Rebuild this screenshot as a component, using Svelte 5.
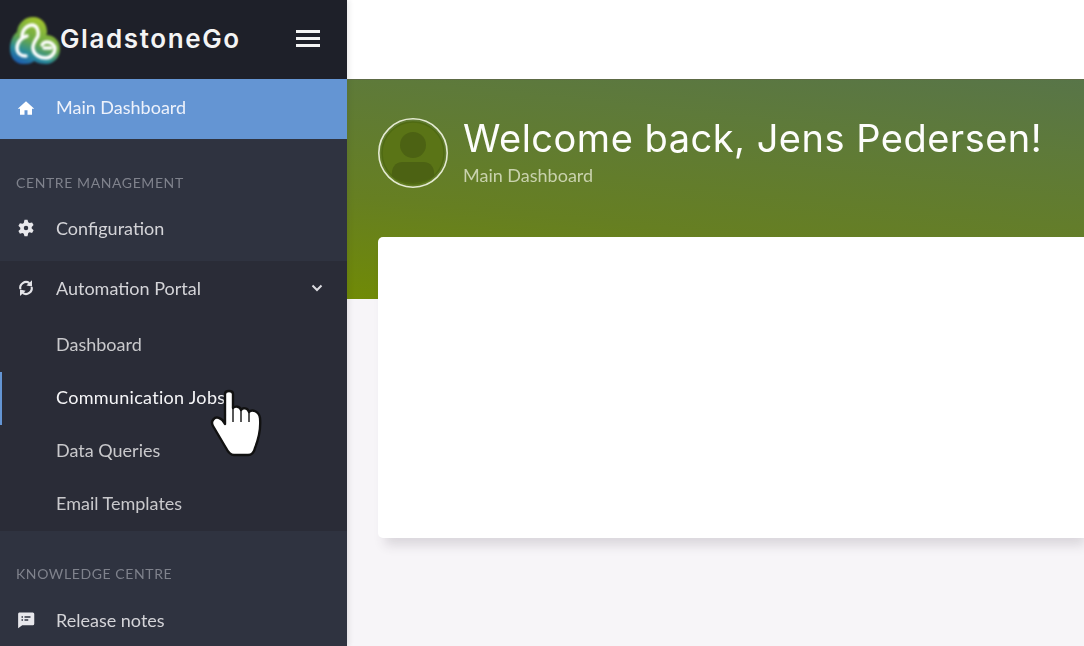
<script lang="ts">
  const subItems = [
    { label: 'Dashboard', active: false },
    { label: 'Communication Jobs', active: true },
    { label: 'Data Queries', active: false },
    { label: 'Email Templates', active: false },
  ];
</script>

<div class="app">
  <aside class="sidebar">
    <div class="brand">
      <svg class="logo" viewBox="0 0 52 50" width="52" height="50" aria-hidden="true">
        <defs>
          <linearGradient id="lg" x1="0.65" y1="0" x2="0.2" y2="1">
            <stop offset="0" stop-color="#a9c82a" />
            <stop offset="0.5" stop-color="#6aa848" />
            <stop offset="0.75" stop-color="#2a8c98" />
            <stop offset="1" stop-color="#1d5cb0" />
          </linearGradient>
        </defs>
        <path d="M2 34C2 26 5 20 9 17 10 8 17 2 25 2c9 0 14 7 14 15 0 1 0 2-1 3 8 0 14 6 14 14 0 8-6 15-14 15-5 0-9-1-12-3-3 3-7 3-11 3C7 49 2 42 2 34z" fill="url(#lg)" />
        <path d="M19 21C14 22 9 27 9 33c0 5 4 8 9 8" fill="none" stroke="#fff" stroke-width="3.400" stroke-linecap="round" />
        <path d="M14 22C14 14 20 10 24 10c5 0 7 6 6 11-2 4-6 8-5 13 1 6 7 9 13 9 5 0 9-5 9-9 0-4-4-7-8-7-2 0-4 1-5 3M36 33h7" fill="none" stroke="#fff" stroke-width="3.400" stroke-linecap="round" />
      </svg>
      <span class="brand-name">GladstoneGo</span>
      <span class="burger"><i></i><i></i><i></i></span>
    </div>

    <a class="item main">
      <svg class="ic" viewBox="0 0 24 24" aria-hidden="true"><path d="M12 3 1 13h3v8h6v-6h4v6h6v-8h3z" fill="#fff" /></svg>
      <span>Main Dashboard</span>
    </a>

    <div class="group">CENTRE MANAGEMENT</div>
    <a class="item">
      <svg class="ic" viewBox="0 0 24 24" aria-hidden="true"><path fill-rule="evenodd" d="M10 1h4l1 3.400 1.700 1 3.400-.9 2 3.500-2.500 2.500v2l2.500 2.500-2 3.500-3.400-.9-1.700 1L14 23h-4l-1-3.400-1.700-1-3.400.9-2-3.500 2.500-2.500v-2L1.900 9l2-3.500 3.400.9 1.700-1zM12 9a3 3 0 1 0 0 6 3 3 0 0 0 0-6z" fill="#e8e8ec" /></svg>
      <span>Configuration</span>
    </a>

    <div class="sub-wrap">
      <a class="item parent">
        <svg class="ic" viewBox="0 0 24 24" aria-hidden="true"><path d="M4.500 13.500A7.700 7.700 0 0 1 16.500 5.500M19.500 10.500A7.700 7.700 0 0 1 7.500 18.500" fill="none" stroke="#e4e4e8" stroke-width="2.800" /><path d="M20 1.500v8.500l-7.500-1.500zM4 22.500V14l7.500 1.500z" fill="#e4e4e8" /></svg>
        <span>Automation Portal</span>
        <svg class="chev" viewBox="0 0 12 8" width="12" height="8" aria-hidden="true"><path d="M1.500 1.500 6 6l4.500-4.500" fill="none" stroke="#dcdce0" stroke-width="2" /></svg>
      </a>
      <ul class="sub">
        {#each subItems as s}
          <li class:active={s.active}>{s.label}</li>
        {/each}
      </ul>
    </div>

    <div class="group second">KNOWLEDGE CENTRE</div>
    <a class="item">
      <svg class="ic" viewBox="0 0 24 24" aria-hidden="true"><path fill-rule="evenodd" d="M3 2h18a2 2 0 0 1 2 2v13a2 2 0 0 1-2 2H7l-5.500 4V4A2 2 0 0 1 3 2zm3 5v2h2V7zm4 0v2h8V7zm-4 4v2h2v-2zm4 0v2h5v-2z" fill="#e8e8ec" /></svg>
      <span>Release notes</span>
    </a>
  </aside>

  <main class="content">
    <div class="topbar"></div>
    <section class="banner">
      <div class="avatar">
        <svg viewBox="0 0 70 70" width="70" height="70" aria-hidden="true">
          <circle cx="35" cy="35" r="34.200" fill="none" stroke="#e4ead2" stroke-width="1.600" />
          <circle cx="35" cy="35" r="31" fill="#5a7416" stroke="#4f6a12" stroke-width="1.500" />
          <circle cx="35" cy="27" r="13" fill="#4c6213" />
          <path d="M14 58c-1-8 3-14 11-14h20c8 0 12 6 11 14-5 4-13 7-21 7s-16-3-21-7z" fill="#4c6213" />
        </svg>
      </div>
      <div class="titles">
        <h1>Welcome back, Jens Pedersen!</h1>
        <p>Main Dashboard</p>
      </div>
    </section>
    <section class="card"></section>
  </main>

  <svg class="cursor" viewBox="0 0 54 70" width="54" height="70" aria-hidden="true">
    <path d="M15 6C15 2 23 2 23 6L23 20C25 18 30 18 31 22C33 19 38 20 39 24C42 21 49 23 50 30C51 40 49 50 45 60C44 65 42 67 38 67L24 67C20 67 18 64 16 60L3 38C0 33 5 28 9 30C12 31 14 34 15 36Z" fill="#fff" stroke="#111" stroke-width="2.400" stroke-linejoin="round" />
    <path d="M23 20V34M31 22V34M39 24V34" stroke="#111" stroke-width="1.400" fill="none" />
  </svg>
</div>

<style>
  :global(body) { margin: 0; background: #f7f5f8; }
  .app {
    position: relative;
    display: flex;
    width: 1084px;
    height: 646px;
    overflow: hidden;
    font-family: Lato, "Open Sans", sans-serif;
    filter: blur(0.35px);
  }

  .sidebar {
    flex: 0 0 347px;
    display: flex;
    flex-direction: column;
    background: #2f3340;
    color: #d4d4d8;
    box-shadow: 2px 0 5px rgba(40, 40, 50, 0.1);
    z-index: 1;
  }
  .brand {
    height: 79px;
    flex: none;
    display: flex;
    align-items: center;
    padding: 0 27px 2px 8px;
    box-sizing: border-box;
    background: #1e2029;
  }
  .logo { flex: none; margin-top: 3px; filter: blur(0.8px); }
  .brand-name {
    font-family: Inter, sans-serif;
    font-weight: 600;
    font-size: 26px;
    color: #f4f4f4;
    letter-spacing: 1.6px;
  }
  .burger {
    margin-left: auto;
    display: flex;
    flex-direction: column;
    gap: 4px;
    width: 24px;
  }
  .burger i { display: block; height: 3px; background: #f4f4f4; }

  .item {
    display: flex;
    align-items: center;
    height: 60px;
    flex: none;
    padding: 0 24px 4px 17px;
    box-sizing: border-box;
    font-size: 18px;
  }
  .item span { flex: 1; }
  .ic { width: 18px; height: 18px; flex: none; margin-right: 21px; }
  .main { background: #6495d3; color: #eef2fb; }
  .main .ic { margin-top: 1px; }

  .group {
    padding: 36px 16px 0;
    height: 24px;
    line-height: 15px;
    font-size: 14px;
    letter-spacing: 0.6px;
    color: #7f828c;
    flex: none;
  }
  .group.second { padding-top: 35px; height: 25px; }
  .group + .item { margin-top: 1px; margin-bottom: 1px; }

  .sub-wrap { background: #2a2c37; }
  .sub-wrap .parent { height: 58px; }
  .sub { list-style: none; margin: 0; padding: 0; }
  .sub li {
    height: 53px;
    line-height: 51px;
    padding-left: 56px;
    font-size: 18px;
    color: #c9c9cc;
    box-sizing: border-box;
  }
  .sub li.active {
    color: #f5f5f7;
    letter-spacing: 0.3px;
    border-left: 2px solid #6495d3;
    padding-left: 54px;
  }

  .content { flex: 1; display: flex; flex-direction: column; min-width: 0; }
  .topbar { height: 79px; flex: none; background: #fff; }
  .banner {
    height: 220px;
    flex: none;
    box-sizing: border-box;
    display: flex;
    align-items: flex-start;
    padding: 38px 0 0 31px;
    background: linear-gradient(186deg, #587548 0%, #5e7a3a 25%, #667f22 65%, #708a06 100%);
    border-top: 1px solid #5d6a45;
    color: #fff;
  }
  .avatar { flex: none; width: 70px; height: 70px; margin-right: 15px; }
  .titles { min-width: 0; }
  h1 {
    margin: 0;
    font-family: Inter, sans-serif;
    font-weight: 400;
    font-size: 38px;
    line-height: 41px;
    letter-spacing: 0.5px;
    white-space: nowrap;
    color: #fdfdfb;
  }
  .titles p {
    margin: 6px 0 0;
    font-size: 18px;
    line-height: 20px;
    color: #c9d2ad;
  }
  .card {
    height: 301px;
    margin: -62px 0 0 31px;
    background: #fff;
    border-radius: 5px 0 0 5px;
    box-shadow: 4px 10px 12px -3px rgba(60, 50, 70, 0.16);
  }

  .cursor {
    position: absolute;
    left: 210px;
    top: 388px;
    z-index: 2;
  }
</style>
